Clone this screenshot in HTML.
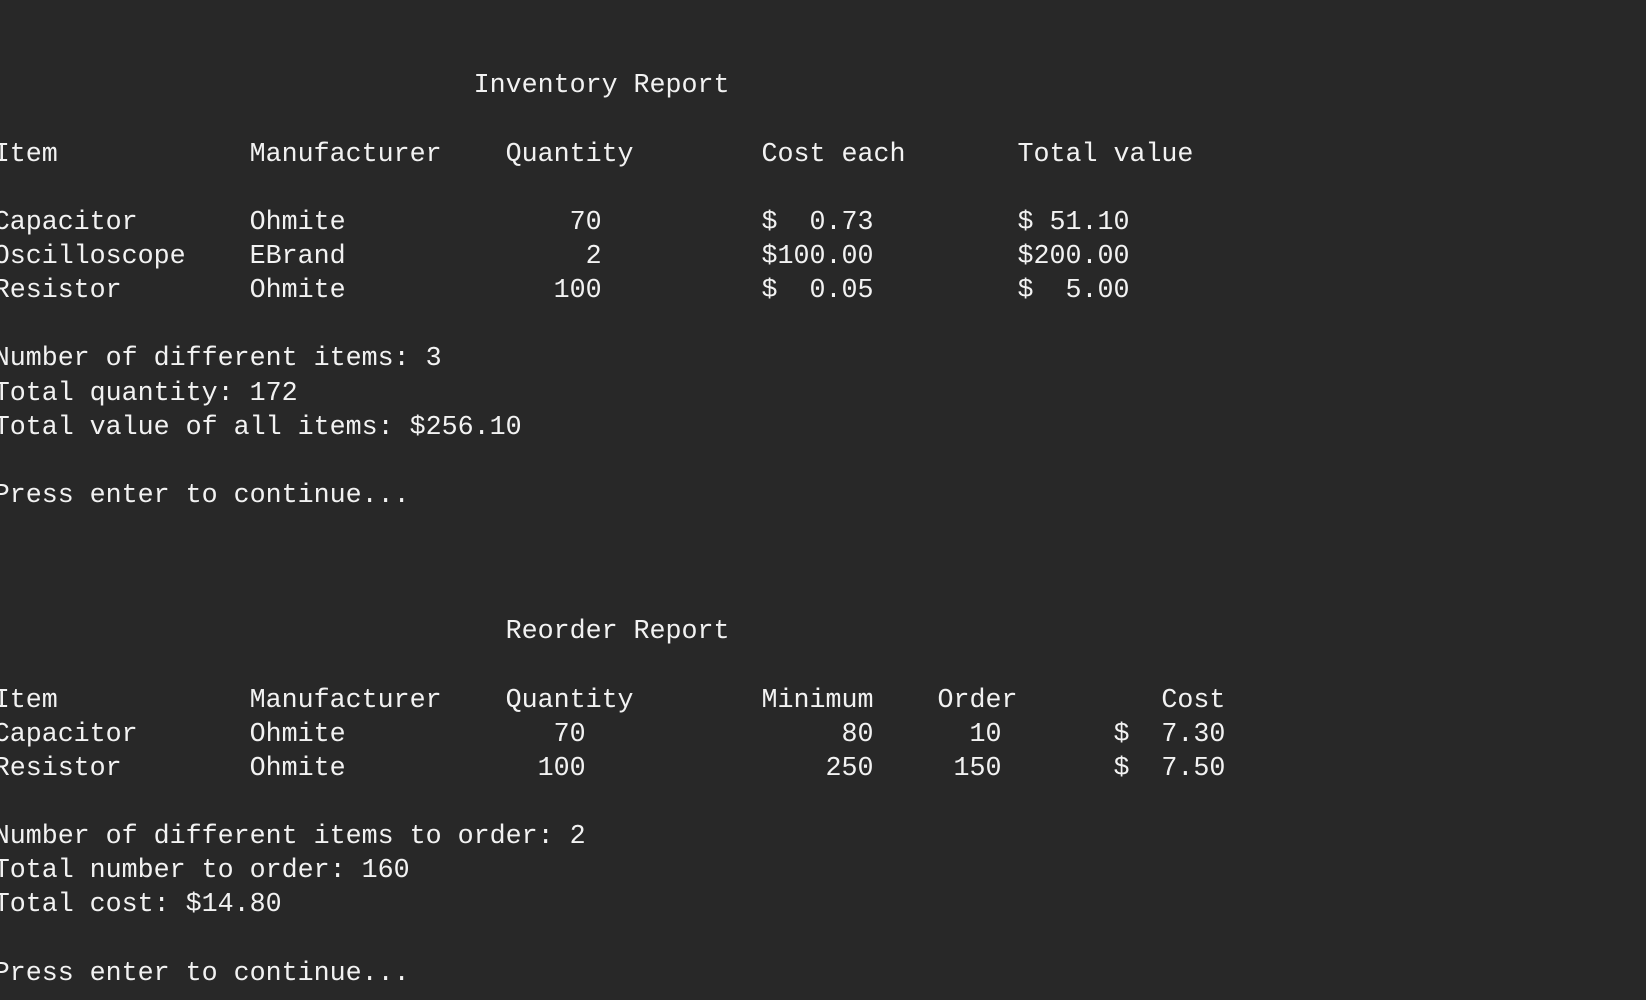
<!DOCTYPE html>
<html><head><meta charset="utf-8"><style>
html,body{margin:0;padding:0;background:#282828;width:1646px;height:1000px;overflow:hidden}
pre{position:absolute;left:-6.3px;top:69.4px;margin:0;font-family:"Liberation Mono",monospace;font-size:26.67px;line-height:34.12px;color:#f2f2f2;white-space:pre}
</style></head><body><pre>                              Inventory Report

Item            Manufacturer    Quantity        Cost each       Total value

Capacitor       Ohmite              70          $  0.73         $ 51.10
Oscilloscope    EBrand               2          $100.00         $200.00
Resistor        Ohmite             100          $  0.05         $  5.00

Number of different items: 3
Total quantity: 172
Total value of all items: $256.10

Press enter to continue...



                                Reorder Report

Item            Manufacturer    Quantity        Minimum    Order         Cost
Capacitor       Ohmite             70                80      10       $  7.30
Resistor        Ohmite            100               250     150       $  7.50

Number of different items to order: 2
Total number to order: 160
Total cost: $14.80

Press enter to continue...</pre></body></html>
